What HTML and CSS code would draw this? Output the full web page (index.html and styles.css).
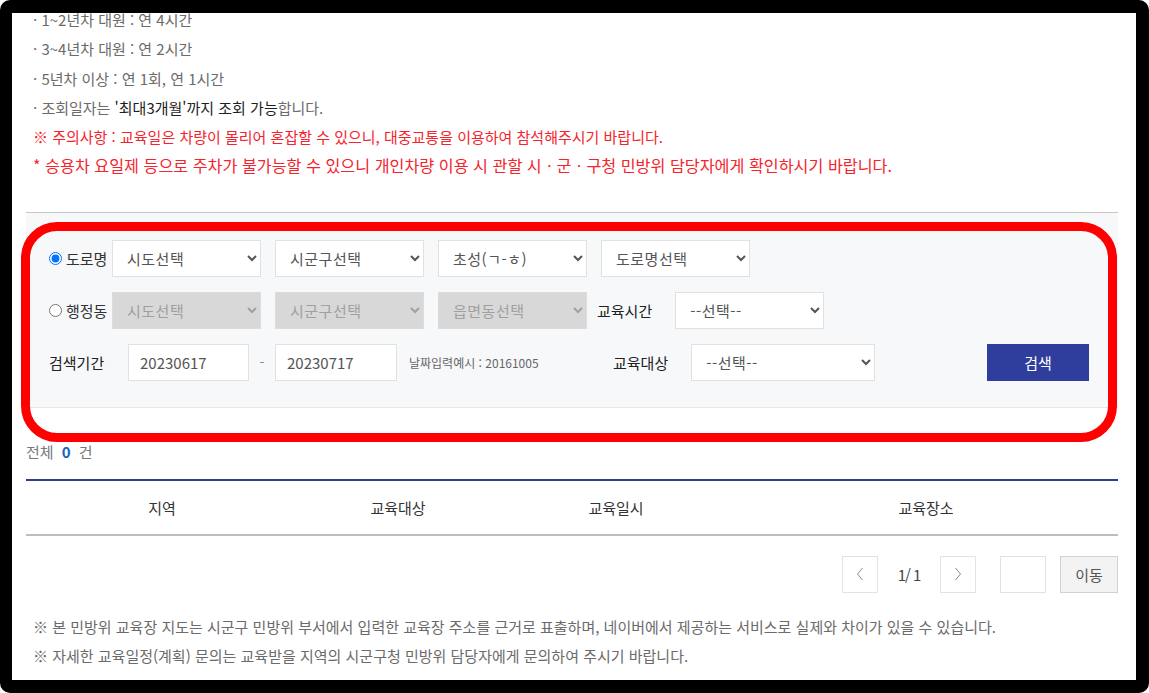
FILE: index.html
```html
<!DOCTYPE html>
<html lang="ko">

<head>
  <meta charset="UTF-8">
  <meta name="viewport" content="width=device-width, initial-scale=1.0">
  <title>민방위 교육일정</title>
  <link rel="stylesheet" href="styles.css">
</head>

<body>
  <div class="frame">
    <div class="page">
      <!-- 안내문 -->
      <ul class="guide">
        <li>· 1~2년차 대원 : 연 4시간</li>
        <li>· 3~4년차 대원 : 연 2시간</li>
        <li>· 5년차 이상 : 연 1회, 연 1시간</li>
        <li>· 조회일자는 <strong>'최대3개월'까지 조회 가능</strong>합니다.</li>
        <li class="warn">※ 주의사항 : 교육일은 차량이 몰리어 혼잡할 수 있으니, 대중교통을 이용하여 참석해주시기 바랍니다.</li>
        <li class="warn big">* 승용차 요일제 등으로 주차가 불가능할 수 있으니 개인차량 이용 시 관할 시ㆍ군ㆍ구청 민방위 담당자에게 확인하시기 바랍니다.</li>
      </ul>

      <!-- 검색영역 -->
      <div class="search_wrap">
        <div class="search">
          <div class="sch_row">
            <label class="sch_radio"><input type="radio" name="addr" checked>도로명</label>
            <select class="sel"><option>시도선택</option></select>
            <select class="sel"><option>시군구선택</option></select>
            <select class="sel"><option>초성(ㄱ-ㅎ)</option></select>
            <select class="sel"><option>도로명선택</option></select>
          </div>
          <div class="sch_row">
            <label class="sch_radio"><input type="radio" name="addr">행정동</label>
            <select class="sel" disabled><option>시도선택</option></select>
            <select class="sel" disabled><option>시군구선택</option></select>
            <select class="sel sel_last" disabled><option>읍면동선택</option></select>
            <span class="sch_tit">교육시간</span>
            <select class="sel"><option>--선택--</option></select>
          </div>
          <div class="sch_row">
            <span class="sch_tit sch_period">검색기간</span>
            <input type="text" class="inp" value="20230617">
            <span class="dash">-</span>
            <input type="text" class="inp inp2" value="20230717">
            <span class="hint">날짜입력예시 : 20161005</span>
            <span class="sch_tit">교육대상</span>
            <select class="sel sel_wide"><option>--선택--</option></select>
            <button type="button" class="btn_search">검색</button>
          </div>
        </div>
        <div class="highlight"></div>
      </div>

      <p class="total">전체 <b>0</b> 건</p>

      <table class="list">
        <colgroup>
          <col style="width:272px">
          <col style="width:200px">
          <col style="width:236px">
          <col>
        </colgroup>
        <thead>
          <tr>
            <th>지역</th>
            <th>교육대상</th>
            <th>교육일시</th>
            <th>교육장소</th>
          </tr>
        </thead>
      </table>

      <div class="paging">
        <a class="pg_btn" href="#">
          <svg width="8" height="14" viewBox="0 0 8 14"><polyline points="6.5,1 1.5,7 6.5,13" fill="none" stroke="#8a8a8a" stroke-width="1"/></svg>
        </a>
        <span class="pg_num">1/ 1</span>
        <a class="pg_btn" href="#">
          <svg width="8" height="14" viewBox="0 0 8 14"><polyline points="1.5,1 6.5,7 1.5,13" fill="none" stroke="#8a8a8a" stroke-width="1"/></svg>
        </a>
        <input type="text" class="pg_inp">
        <button type="button" class="pg_go">이동</button>
      </div>

      <ul class="notes">
        <li>※ 본 민방위 교육장 지도는 시군구 민방위 부서에서 입력한 교육장 주소를 근거로 표출하며, 네이버에서 제공하는 서비스로 실제와 차이가 있을 수 있습니다.</li>
        <li>※ 자세한 교육일정(계획) 문의는 교육받을 지역의 시군구청 민방위 담당자에게 문의하여 주시기 바랍니다.</li>
      </ul>
    </div>
  </div>
</body>

</html>
```

FILE: styles.css
```css
* {
  box-sizing: border-box;
}

body {
  margin: 0;
  background: #fff;
  font-family: "Noto Sans CJK KR", "Noto Sans", sans-serif;
}

/* 바깥 검은 테두리 */
.frame {
  height: 693px;
  border: 13px solid #000;
  border-left-width: 12px;
  border-radius: 10px;
}

.page {
  height: 100%;
  overflow: hidden;
  background: #fff;
  padding: 0 18px 0 14px;
}

ul {
  margin: 0;
  padding: 0;
  list-style: none;
}

/* 안내문 */
.guide {
  margin-top: -8px;
  padding-left: 7px;
  font-size: 15px;
  line-height: 29.3px;
  color: #6b6b6b;
}

.guide strong {
  font-weight: normal;
  color: #1e1e1e;
}

.guide .warn {
  color: #f5242c;
}

.guide .big {
  font-size: 16.2px;
}

/* 검색영역 */
.search_wrap {
  position: relative;
  margin-top: 31px;
}

.search {
  border-top: 1px solid #c8c8c8;
  border-bottom: 1px solid #e6e8ec;
  background: #f7f8fa;
  padding: 27px 29px 26px 23px;
}

.sch_row {
  display: flex;
  align-items: center;
  height: 37px;
}

.sch_row + .sch_row {
  margin-top: 15px;
}

.sch_radio {
  display: flex;
  align-items: center;
  width: 63px;
  font-size: 15px;
  color: #333;
}

.sch_radio input {
  margin: 0 4px 0 0;
  width: 13px;
  height: 13px;
}

.sel {
  width: 149px;
  height: 37px;
  margin-right: 14px;
  padding: 0 8px 0 10px;
  border: 1px solid #e1e1e1;
  border-radius: 0;
  background: #fff;
  font-family: inherit;
  font-size: 15px;
  letter-spacing: 0.5px;
  color: #555;
}

.sel:disabled {
  background: #d8d8d8;
  border-color: #dcdcdc;
  color: #a0a0a0;
  opacity: 1;
}

.sel_last {
  margin-right: 10px;
}

.sel_wide {
  width: 184px;
}

.sch_tit {
  font-size: 15px;
  color: #222;
  margin-right: 23px;
}

.sch_period {
  width: 79px;
  margin-right: 0;
}

.inp {
  width: 121px;
  height: 37px;
  padding: 0 11px;
  border: 1px solid #e1e1e1;
  background: #fff;
  font-family: inherit;
  font-size: 15px;
  color: #555;
}

.inp2 {
  width: 122px;
}

.dash {
  width: 26px;
  text-align: center;
  font-size: 14px;
  color: #888;
}

.hint {
  width: 216px;
  padding-left: 12px;
  font-size: 12px;
  color: #666;
}

.btn_search {
  margin-left: auto;
  width: 102px;
  height: 37px;
  border: 0;
  background: #2f3e9d;
  color: #fff;
  font-family: inherit;
  font-size: 15px;
}

/* 사각 하이라이트 */
.highlight {
  position: absolute;
  top: 10px;
  left: -5px;
  width: 1096px;
  height: 220px;
  border: 9px solid #ff0000;
  border-radius: 36px;
  pointer-events: none;
}

.total {
  margin: 34px 0 17px;
  line-height: 20px;
  font-size: 15px;
  color: #777;
}

.total b {
  margin: 0 4px;
  color: #1566c0;
}

/* 목록 */
.list {
  width: 100%;
  table-layout: fixed;
  border-collapse: collapse;
  border-top: 2px solid #2f3d96;
  border-bottom: 2px solid #bdbdbd;
}

.list th {
  height: 55px;
  padding: 0;
  font-weight: normal;
  font-size: 15px;
  color: #333;
}

.paging {
  display: flex;
  justify-content: flex-end;
  align-items: center;
  margin-top: 20px;
  height: 37px;
}

.pg_btn {
  display: flex;
  align-items: center;
  justify-content: center;
  width: 36px;
  height: 37px;
  border: 1px solid #e3e3e3;
  background: #fff;
}

.pg_num {
  width: 62px;
  text-align: center;
  font-size: 15px;
  color: #444;
  letter-spacing: -1px;
}

.pg_inp {
  width: 46px;
  height: 37px;
  margin-left: 24px;
  border: 1px solid #e1e1e1;
}

.pg_go {
  width: 58px;
  height: 37px;
  margin-left: 14px;
  border: 1px solid #d2d2d2;
  background: #f3f3f3;
  font-family: inherit;
  font-size: 15px;
  color: #555;
}

/* 하단 안내 */
.notes {
  margin-top: 19px;
  padding-left: 7px;
  font-size: 15px;
  line-height: 29px;
  color: #6b6b6b;
}
```
